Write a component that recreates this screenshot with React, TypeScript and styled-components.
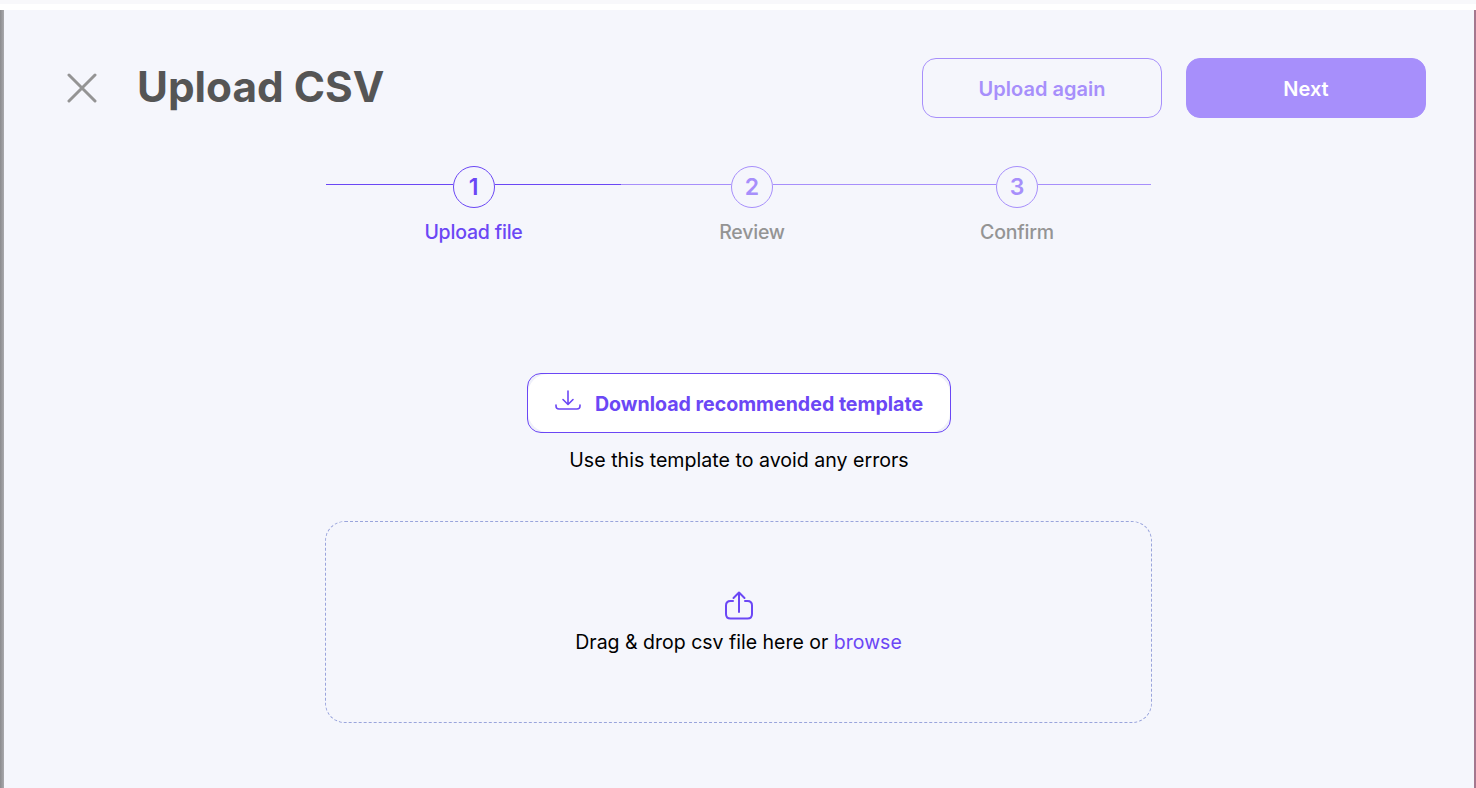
import styled, { createGlobalStyle } from 'styled-components';

const PURPLE = '#6b47f5';
const PURPLE_LIGHT = '#a78ffb';
const GREY = '#949494';
const FONT = '"Inter", "Liberation Sans", sans-serif';

// ====

const GlobalStyle = createGlobalStyle`
  html, body {
    margin: 0;
    padding: 0;
    background: #ffffff;
  }
  * {
    box-sizing: border-box;
  }
`;

const Root = styled.div`
  width: 1476px;
  height: 788px;
  overflow: hidden;
  display: flex;
  flex-direction: column;
  font-family: ${FONT};
`;

const TopBand = styled.div`
  height: 10px;
  flex: none;
  background: linear-gradient(#f8f8fb 0 4px, #ffffff 4px);
`;

const Body = styled.div`
  flex: 1;
  display: flex;
  min-height: 0;
`;

const LeftEdge = styled.div`
  width: 4px;
  flex: none;
  background: linear-gradient(90deg, #8b8b8e, #a9a9ad);
`;

const RightEdge = styled.div`
  width: 2px;
  flex: none;
  background: #a4788f;
`;

const Panel = styled.main`
  flex: 1;
  background: #f5f6fc;
  padding: 48px 48px 0 63px;
  display: flex;
  flex-direction: column;
`;

const Header = styled.header`
  display: flex;
  align-items: center;
  height: 60px;
`;

const CloseButton = styled.button`
  width: 30px;
  height: 30px;
  padding: 0;
  border: none;
  background: none;
  display: flex;
  margin-right: 40px;
`;

const Title = styled.h1`
  flex: 1;
  margin: 0 0 2px;
  font-size: 42.3px;
  line-height: 56px;
  font-weight: 700;
  color: #555555;
`;

const HeaderButton = styled.button<{ $filled?: boolean }>`
  width: 240px;
  height: 60px;
  margin-left: 24px;
  padding: 1px 0 0;
  border-radius: 14px;
  border: 1px solid ${PURPLE_LIGHT};
  background: ${({ $filled }) => ($filled ? PURPLE_LIGHT : 'transparent')};
  color: ${({ $filled }) => ($filled ? '#ffffff' : PURPLE_LIGHT)};
  font-family: ${FONT};
  font-size: 20px;
  font-weight: 600;
`;

const Content = styled.div`
  display: flex;
  flex-direction: column;
  align-items: center;
  margin-left: -63px;
  margin-right: -48px;
`;

const Stepper = styled.ol`
  list-style: none;
  margin: 48px 1px 0 0;
  padding: 0;
  width: 825px;
  display: grid;
  grid-template-columns: 295px 262px 268px;
`;

const Step = styled.li`
  display: flex;
  flex-direction: column;
  align-items: center;
`;

const StepTrack = styled.div`
  width: 100%;
  display: flex;
`;

const StepLine = styled.span<{ $active?: boolean }>`
  flex: 1;
  height: 1px;
  margin-top: 18px;
  background: ${({ $active }) => ($active ? PURPLE : PURPLE_LIGHT)};
`;

const StepCircle = styled.span<{ $active?: boolean }>`
  width: 42px;
  height: 42px;
  flex: none;
  padding-bottom: 1px;
  border-radius: 50%;
  border: 1px solid ${({ $active }) => ($active ? PURPLE : PURPLE_LIGHT)};
  color: ${({ $active }) => ($active ? PURPLE : PURPLE_LIGHT)};
  display: flex;
  align-items: center;
  justify-content: center;
  font-size: 23px;
  font-weight: 600;
`;

const StepLabel = styled.span<{ $active?: boolean }>`
  margin-top: 11px;
  font-size: 19.5px;
  line-height: 26px;
  font-weight: 500;
  letter-spacing: -0.2px;
  color: ${({ $active }) => ($active ? PURPLE : GREY)};
`;

const TemplateButton = styled.button`
  width: 424px;
  height: 60px;
  margin-top: 128px;
  padding: 0;
  border: 1px solid ${PURPLE};
  border-radius: 14px;
  background: #eff0f9;
  overflow: hidden;
`;

const TemplateFace = styled.span`
  height: 100%;
  padding-top: 2px;
  display: flex;
  align-items: center;
  justify-content: center;
  gap: 14px;
  border-radius: 20px;
  background: #ffffff;
  color: ${PURPLE};
  font-family: ${FONT};
  font-size: 19.6px;
  font-weight: 700;
`;

const DownloadIcon = styled.svg`
  margin-bottom: 9px;
`;

const Caption = styled.p`
  margin: 14px 0 0;
  font-size: 19.6px;
  line-height: 26px;
  color: #000000;
`;

const DropZone = styled.div`
  width: 827px;
  height: 202px;
  margin: 48px 1px 0 0;
  border: 1px dashed #9aa5dc;
  border-radius: 20px;
  display: flex;
  flex-direction: column;
  align-items: center;
  padding-top: 69px;
`;

const DropText = styled.p`
  margin: 9px 0 0;
  font-size: 19.5px;
  line-height: 26px;
  color: #000000;
`;

const Browse = styled.a`
  color: ${PURPLE};
`;

const steps = [
  { number: 1, label: 'Upload file', active: true },
  { number: 2, label: 'Review', active: false },
  { number: 3, label: 'Confirm', active: false },
];

const App = () => (
  <Root>
    <GlobalStyle />
    <TopBand />
    <Body>
      <LeftEdge />
      <Panel>
        <Header>
          <CloseButton aria-label="Close">
            <svg width="30" height="30" viewBox="0 0 30 30" fill="none" stroke="#949494" strokeWidth="3" strokeLinecap="round">
              <path d="M2 2 L28 28 M28 2 L2 28" />
            </svg>
          </CloseButton>
          <Title>Upload CSV</Title>
          <HeaderButton>Upload again</HeaderButton>
          <HeaderButton $filled>Next</HeaderButton>
        </Header>
        <Content>
          <Stepper>
            {steps.map(({ number, label, active }) => (
              <Step key={number}>
                <StepTrack>
                  <StepLine $active={active} />
                  <StepCircle $active={active}>{number}</StepCircle>
                  <StepLine $active={active} />
                </StepTrack>
                <StepLabel $active={active}>{label}</StepLabel>
              </Step>
            ))}
          </Stepper>
          <TemplateButton>
            <TemplateFace>
              <DownloadIcon width="26" height="20" viewBox="0 0 26 20" fill="none" stroke={PURPLE} strokeWidth="1.6" strokeLinecap="round" strokeLinejoin="round">
                <path d="M13 1 V14 M8 9.500 L13 14.500 L18 9.500" />
                <path d="M1 15 V16 Q1 19 4 19 H22 Q25 19 25 16 V15" />
              </DownloadIcon>
              Download recommended template
            </TemplateFace>
          </TemplateButton>
          <Caption>Use this template to avoid any errors</Caption>
          <DropZone>
            <svg width="28" height="29" viewBox="0 0 28 29" fill="none" stroke={PURPLE} strokeWidth="2" strokeLinecap="round" strokeLinejoin="round">
              <path d="M14 21 V2 M8.500 7 L14 1.500 L19.500 7" />
              <path d="M8 10 H5.500 Q1 10 1 14.500 V23 Q1 27.500 5.500 27.500 H22.500 Q27 27.500 27 23 V14.500 Q27 10 22.500 10 H20" />
            </svg>
            <DropText>
              Drag &amp; drop csv file here or <Browse>browse</Browse>
            </DropText>
          </DropZone>
        </Content>
      </Panel>
      <RightEdge />
    </Body>
  </Root>
);

export default App;
